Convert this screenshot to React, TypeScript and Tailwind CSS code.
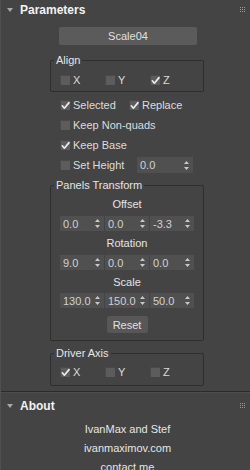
import React from "react";

const Check = ({ checked }: { checked?: boolean }) => (
  <span className="relative w-[10px] h-[10px] bg-[#5c5c5c] border-t border-l border-[#4a4a4a] shrink-0">
    {checked && (
      <svg className="absolute -left-[1px] -top-[1px]" width="11" height="11" viewBox="0 0 11 11">
        <path d="M2.3 5.8 L4.4 8.2 L9 2.6" fill="none" stroke="#ececec" strokeWidth="1.7" strokeLinecap="round" strokeLinejoin="round" />
      </svg>
    )}
  </span>
);

const CheckItem = ({ label, checked, w }: { label: string; checked?: boolean; w?: string }) => (
  <div className={`flex items-center gap-[3px] ${w ?? ""}`}>
    <Check checked={checked} />
    <span>{label}</span>
  </div>
);

const Arrows = () => (
  <svg width="5" height="9" viewBox="0 0 5 9" className="shrink-0">
    <path d="M2.5 0 L5 3 L0 3 Z M0 6 L5 6 L2.5 9 Z" fill="#c8c8c8" />
  </svg>
);

const Spinner = ({ value, w }: { value: string; w: string }) => (
  <div className={`flex items-center justify-between h-[15px] bg-[#505050] pl-[3px] pr-[4px] ${w}`}>
    <span className="text-[#d0d0d0]">{value}</span>
    <Arrows />
  </div>
);

const Dots = () => (
  <svg width="6" height="6" viewBox="0 0 6 6">
    {[0, 2, 4].map((x) =>
      [0, 2, 4].map((y) => <rect key={`${x}-${y}`} x={x} y={y} width="1" height="1" fill="#9a9a9a" />)
    )}
  </svg>
);

const RolloutHeader = ({ title }: { title: string }) => (
  <div className="flex items-center h-[20px] pl-[6px] pr-[4px]">
    <svg width="6" height="5" viewBox="0 0 6 5" className="mr-[7px]">
      <path d="M0 0 L6 0 L3 4 Z" fill="#a8a8a8" />
    </svg>
    <span className="font-bold text-[12px] text-[#f2f2f2]">{title}</span>
    <div className="ml-auto">
      <Dots />
    </div>
  </div>
);

const Group = ({ label, className, children }: { label: string; className: string; children: React.ReactNode }) => (
  <div className={`relative border border-[#2e2e2e] rounded-[2px] w-[154px] ${className}`}>
    <span className="absolute -top-[7px] left-[3px] px-[2px] leading-[12px] bg-[#444444] text-[#e4e4e4]">{label}</span>
    {children}
  </div>
);

const Row3 = ({ values }: { values: string[] }) => (
  <div className="flex justify-center gap-px">
    {values.map((v, i) => (
      <Spinner key={i} value={v} w="w-[44px]" />
    ))}
  </div>
);

export default function App() {
  return (
    <div className="w-[250px] h-[470px] overflow-hidden bg-[#444444] text-[#dcdcdc] text-[11px] leading-[14px] font-['Liberation_Sans',Arial,sans-serif] border-l border-[#505050]">
      <RolloutHeader title="Parameters" />

      <div className="pl-[49px]">
        <div className="ml-[9px] mt-[7px] w-[138px] h-[18px] bg-[#5b5b5b] rounded-[2px] flex items-center justify-center text-[#e0e0e0]">
          Scale04
        </div>

        <Group label="Align" className="mt-[15px] h-[32px] pt-[12px] pl-[9px]">
          <div className="flex items-center h-[14px]">
            <CheckItem label="X" w="w-[45px]" />
            <CheckItem label="Y" w="w-[45px]" />
            <CheckItem label="Z" checked />
          </div>
        </Group>

        <div className="mt-[3px] pl-[10px]">
          <div className="flex items-center h-[20px]">
            <CheckItem label="Selected" checked w="w-[69px]" />
            <CheckItem label="Replace" checked />
          </div>
          <div className="flex items-center h-[20px]">
            <CheckItem label="Keep Non-quads" />
          </div>
          <div className="flex items-center h-[20px]">
            <CheckItem label="Keep Base" checked />
          </div>
          <div className="flex items-center h-[20px]">
            <CheckItem label="Set Height" w="w-[77px]" />
            <div className="flex items-center justify-between h-[16px] w-[56px] bg-[#505050] pl-[3px] pr-[4px]">
              <span className="text-[#d0d0d0]">0.0</span>
              <Arrows />
            </div>
          </div>
        </div>

        <Group label="Panels Transform" className="mt-[10px] h-[156px] pt-[11px]">
          <div className="text-center text-[#e4e4e4]">Offset</div>
          <div className="mt-[5px]">
            <Row3 values={["0.0", "0.0", "-3.3"]} />
          </div>
          <div className="mt-[5px] text-center text-[#e4e4e4]">Rotation</div>
          <div className="mt-[5px]">
            <Row3 values={["9.0", "0.0", "0.0"]} />
          </div>
          <div className="mt-[5px] text-center text-[#e4e4e4]">Scale</div>
          <div className="mt-[4px]">
            <Row3 values={["130.0", "150.0", "50.0"]} />
          </div>
          <div className="mt-[8px] flex justify-center">
            <div className="w-[41px] h-[17px] bg-[#575757] rounded-[2px] flex items-center justify-center text-[#e0e0e0]">
              Reset
            </div>
          </div>
        </Group>

        <Group label="Driver Axis" className="mt-[12px] h-[33px] pt-[11px] pl-[9px]">
          <div className="flex items-center h-[14px]">
            <CheckItem label="X" checked w="w-[45px]" />
            <CheckItem label="Y" w="w-[45px]" />
            <CheckItem label="Z" />
          </div>
        </Group>
      </div>

      <div className="mt-[5px] h-px bg-[#2b2b2b]" />
      <div className="h-px bg-[#4e4e4e]" />

      <div className="mt-[3px]">
        <RolloutHeader title="About" />
      </div>

      <div className="mt-[4px] pl-[4px] text-center text-[#e6e6e6] leading-[19px]">
        <div>IvanMax and Stef</div>
        <div>ivanmaximov.com</div>
        <div>contact me</div>
      </div>
    </div>
  );
}
